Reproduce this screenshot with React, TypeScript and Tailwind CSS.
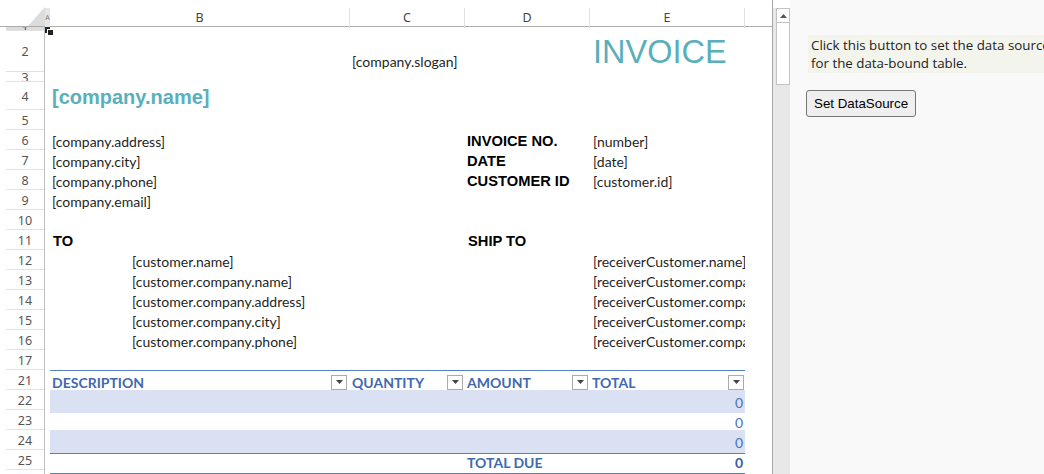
import React from 'react';

// column widths: A, B, C, D, E, F (partial)
const GRID = 'grid grid-cols-[5px_300px_115px_125px_155px_27px]';
const BODY = "font-['Lato'] text-[14px] text-[#1f1f1f]";
const LABEL = "font-['Liberation_Sans'] text-[14.7px] font-bold text-black";
const HEAD = "font-['Lato'] text-[14px] font-bold text-[#4169b0]";

function Row({
  n,
  h = 'h-[20px]',
  active = false,
  children,
}: {
  n: number;
  h?: string;
  active?: boolean;
  children?: React.ReactNode;
}) {
  return (
    <div className={`flex shrink-0 ${h}`}>
      <div className="w-[45px] shrink-0 border-r border-[#bfbfbf] pl-[6px]">
        <div
          className={`flex h-full items-center justify-center overflow-hidden border-b border-[#e2e2e2] pt-[3px] font-['Noto_Sans'] text-[12.5px] leading-none text-[#555] ${
            active ? 'bg-[#dcdcdc]' : ''
          }`}
        >
          {n}
        </div>
      </div>
      <div className={`${GRID} h-full`}>{children}</div>
    </div>
  );
}

function Cell({
  col,
  className = '',
  children,
}: {
  col: string;
  className?: string;
  children?: React.ReactNode;
}) {
  return (
    <div
      className={`${col} row-start-1 flex items-center overflow-hidden whitespace-nowrap px-[2px] pt-[2px] ${className}`}
    >
      {children}
    </div>
  );
}

function Drop() {
  return (
    <div className="flex h-[15px] w-[16px] shrink-0 items-center justify-center border border-[#ababab] bg-white">
      <svg width="7" height="4" viewBox="0 0 7 4">
        <path d="M0 0h7L3.5 4z" fill="#444" />
      </svg>
    </div>
  );
}

function TableRow({
  n,
  className = '',
  children,
}: {
  n: number;
  className?: string;
  children?: React.ReactNode;
}) {
  return (
    <Row n={n}>
      <div
        className={`col-span-4 col-start-2 row-start-1 grid grid-cols-[300px_115px_125px_155px] ${className}`}
      >
        {children}
      </div>
    </Row>
  );
}

const customer = [
  '[customer.name]',
  '[customer.company.name]',
  '[customer.company.address]',
  '[customer.company.city]',
  '[customer.company.phone]',
];

const receiver = [
  '[receiverCustomer.name]',
  '[receiverCustomer.company.name]',
  '[receiverCustomer.company.address]',
  '[receiverCustomer.company.city]',
  '[receiverCustomer.company.phone]',
];

export default function App() {
  return (
    <div className="flex h-[474px] w-[1044px] overflow-hidden bg-white">
      {/* Sheet */}
      <div className="relative flex w-[772px] shrink-0 flex-col">
        <div className="h-[8px] shrink-0" />

        {/* Column headers */}
        <div className="flex h-[19px] shrink-0 border-b border-[#ababab]">
          <div className="flex w-[45px] shrink-0 items-end justify-end">
            <svg width="18" height="19" viewBox="0 0 18 19">
              <path d="M1 19H18V0z" fill="#dcdcdc" />
            </svg>
          </div>
          <div className={`${GRID} font-['Noto_Sans'] text-[12.5px] text-[#444]`}>
            <div className="flex items-center justify-center overflow-hidden bg-[#e6e6e6] text-[7px] text-[#777]">
              A
            </div>
            {['B', 'C', 'D', 'E'].map((c) => (
              <div key={c} className="flex items-center justify-center border-r border-[#e0e0e0] pt-[1px]">
                {c}
              </div>
            ))}
            <div />
          </div>
        </div>

        <Row n={1} h="h-[4px]" active />
        <Row n={2} h="h-[41px]">
          <Cell col="col-start-3" className={`${BODY} items-end pb-0`}>
            [company.slogan]
          </Cell>
          <Cell
            col="col-start-5"
            className="pl-[3px] font-['Liberation_Sans'] text-[32.5px] leading-none text-[#5aafbd]"
          >
            INVOICE
          </Cell>
        </Row>
        <Row n={3} h="h-[10px]" />
        <Row n={4} h="h-[28px]">
          <Cell
            col="col-start-2"
            className="font-['Liberation_Sans'] text-[20px] font-bold text-[#5aafbd]"
          >
            [company.name]
          </Cell>
        </Row>
        <Row n={5} />
        <Row n={6}>
          <Cell col="col-start-2" className={BODY}>[company.address]</Cell>
          <Cell col="col-start-4" className={LABEL}>INVOICE NO.</Cell>
          <Cell col="col-start-5" className={`${BODY} pl-[3px]`}>[number]</Cell>
        </Row>
        <Row n={7}>
          <Cell col="col-start-2" className={BODY}>[company.city]</Cell>
          <Cell col="col-start-4" className={LABEL}>DATE</Cell>
          <Cell col="col-start-5" className={`${BODY} pl-[3px]`}>[date]</Cell>
        </Row>
        <Row n={8}>
          <Cell col="col-start-2" className={BODY}>[company.phone]</Cell>
          <Cell col="col-start-4" className={LABEL}>CUSTOMER ID</Cell>
          <Cell col="col-start-5" className={`${BODY} pl-[3px]`}>[customer.id]</Cell>
        </Row>
        <Row n={9}>
          <Cell col="col-start-2" className={BODY}>[company.email]</Cell>
        </Row>
        <Row n={10} />
        <Row n={11}>
          <Cell col="col-start-2" className={`${LABEL} pl-[3px]`}>TO</Cell>
          <Cell col="col-start-4" className={`${LABEL} pl-[3px]`}>SHIP TO</Cell>
        </Row>
        {customer.map((c, i) => (
          <Row key={c} n={12 + i}>
            <Cell col="col-start-2" className={`${BODY} pl-[82px]`}>{c}</Cell>
            <Cell col="col-start-5" className={`${BODY} pl-[3px]`}>{receiver[i]}</Cell>
          </Row>
        ))}
        <Row n={17} />

        {/* Data-bound table */}
        <TableRow n={21} className="border-y border-[#5a7fc0]">
          <div className="flex items-center justify-between pl-[2px] pr-[3px]">
            <span className={`${HEAD} pt-[1px]`}>DESCRIPTION</span>
            <Drop />
          </div>
          <div className="flex items-center justify-between pl-[2px] pr-[2px]">
            <span className={`${HEAD} pt-[1px]`}>QUANTITY</span>
            <Drop />
          </div>
          <div className="flex items-center justify-between pl-[2px] pr-[2px]">
            <span className={`${HEAD} pt-[1px]`}>AMOUNT</span>
            <Drop />
          </div>
          <div className="flex items-center justify-between pl-[2px] pr-[1px]">
            <span className={`${HEAD} pt-[1px]`}>TOTAL</span>
            <Drop />
          </div>
        </TableRow>
        {[22, 23, 24].map((n) => (
          <TableRow
            key={n}
            n={n}
            className={
              n === 22
                ? 'bg-[#d9e1f2]'
                : n === 24
                  ? 'border-b border-[#5a7fc0] bg-[#d9e1f2]'
                  : ''
            }
          >
            <div />
            <div />
            <div />
            <div className="flex items-center justify-end pr-[2px] pt-[2px] font-['Lato'] text-[14px] text-[#4a74bb]">
              0
            </div>
          </TableRow>
        ))}
        <TableRow n={25} className="border-b border-[#5a7fc0]">
          <div />
          <div />
          <div className="flex items-center pl-[2px] pt-[2px]">
            <span className={HEAD}>TOTAL DUE</span>
          </div>
          <div className="flex items-center justify-end pr-[2px] pt-[2px] font-['Lato'] text-[14px] font-bold text-[#3a5ea3]">
            0
          </div>
        </TableRow>
        <Row n={26} />

        {/* Active cell marker on A1 */}
        <div className="absolute left-[45px] top-[27px] h-[6px] w-[5px] border-l-2 border-t-2 border-[#222]" />
        <div className="absolute left-[48px] top-[30px] h-[5px] w-[5px] bg-[#222]" />
      </div>

      {/* Vertical scrollbar */}
      <div className="flex w-[18px] shrink-0 flex-col border-l border-[#a6a6a6] bg-[#e8e8e8]">
        <div className="h-[8px] shrink-0 bg-white" />
        <div className="flex flex-col items-end">
          <div className="flex h-[15px] w-[14px] items-center justify-center border border-[#c3c3c3] bg-white">
            <svg width="7" height="4" viewBox="0 0 7 4">
              <path d="M0 4h7L3.5 0z" fill="#555" />
            </svg>
          </div>
          <div className="h-[62px] w-[14px] border border-t-0 border-[#c3c3c3] bg-white" />
        </div>
      </div>

      {/* Side panel */}
      <div className="flex flex-1 flex-col items-start bg-[#f9f9f9] pl-[16px] pt-[35px]">
        <div className="ml-[2px] w-[260px] shrink-0 whitespace-nowrap bg-[#f3f5ec] py-[1px] pl-[3px] font-['Open_Sans'] text-[13.33px] leading-[18px] text-[#222]">
          Click this button to set the data source
          <br />
          for the data-bound table.
        </div>
        <button className="mt-[17px] h-[27px] rounded-[3px] border border-[#767676] bg-[#efefef] px-[7px] font-['Liberation_Sans'] text-[13.33px] text-black">
          Set DataSource
        </button>
      </div>
    </div>
  );
}
